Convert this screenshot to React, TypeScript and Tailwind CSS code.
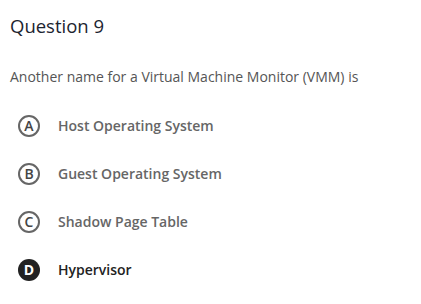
const options = [
  { letter: 'A', text: 'Host Operating System', selected: false },
  { letter: 'B', text: 'Guest Operating System', selected: false },
  { letter: 'C', text: 'Shadow Page Table', selected: false },
  { letter: 'D', text: 'Hypervisor', selected: true },
]

export default function App() {
  return (
    <div className="h-[304px] w-[421px] bg-white px-[10px] pt-[11px] font-['Open_Sans',sans-serif]">
      <h1 className="text-[18.5px] leading-[30px] text-[#1c2430]">Question 9</h1>
      <p className="mt-[26px] text-[14px] leading-[20px] text-[#555]">
        Another name for a Virtual Machine Monitor (VMM) is
      </p>
      <div className="mt-[28px] flex flex-col gap-[26px] pl-[8px]">
        {options.map((o) => (
          <div key={o.letter} className="flex items-center gap-[18px]">
            {o.selected ? (
              <div className="flex h-[22px] w-[22px] shrink-0 items-center justify-center rounded-full bg-[#222] text-[14px] font-bold leading-none text-white">
                {o.letter}
              </div>
            ) : (
              <div className="flex h-[22px] w-[22px] shrink-0 items-center justify-center rounded-full border-2 border-[#666] text-[14px] font-semibold leading-none text-[#444]">
                {o.letter}
              </div>
            )}
            <span
              className={
                o.selected
                  ? 'text-[14px] font-semibold leading-[22px] text-[#222]'
                  : 'text-[14px] font-semibold leading-[22px] text-[#666]'
              }
            >
              {o.text}
            </span>
          </div>
        ))}
      </div>
    </div>
  )
}
